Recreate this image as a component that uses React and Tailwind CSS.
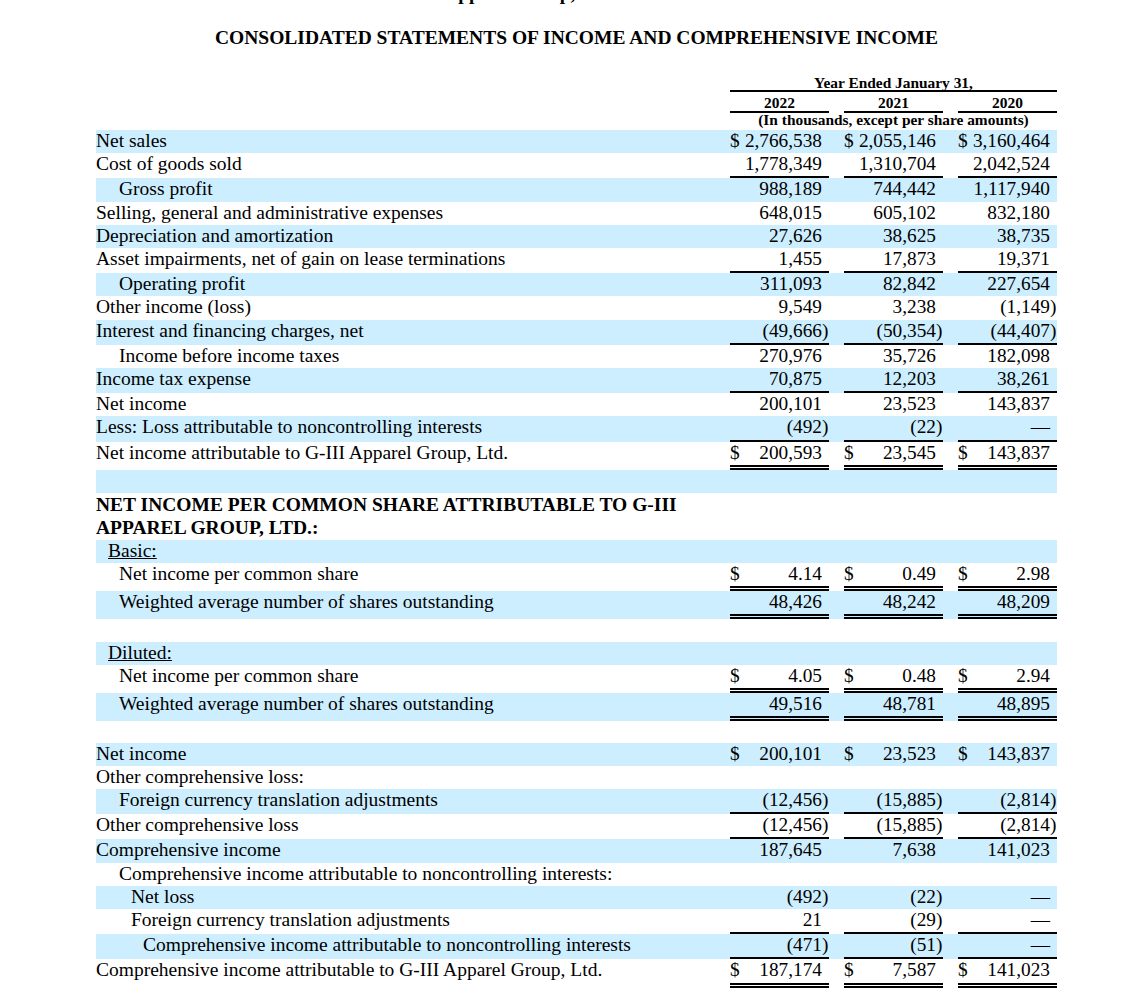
export default function App() {
  const indents = ['pl-0', 'pl-[12px]', 'pl-[23px]', 'pl-[35px]', 'pl-[47px]'];

  const top = [
    { label: 'Net sales', usd: true, vals: ['2,766,538', '2,055,146', '3,160,464'] },
    { label: 'Cost of goods sold', vals: ['1,778,349', '1,310,704', '2,042,524'], line: 'single' },
    { label: 'Gross profit', indent: 2, vals: ['988,189', '744,442', '1,117,940'] },
    { label: 'Selling, general and administrative expenses', vals: ['648,015', '605,102', '832,180'] },
    { label: 'Depreciation and amortization', vals: ['27,626', '38,625', '38,735'] },
    { label: 'Asset impairments, net of gain on lease terminations', vals: ['1,455', '17,873', '19,371'], line: 'single' },
    { label: 'Operating profit', indent: 2, vals: ['311,093', '82,842', '227,654'] },
    { label: 'Other income (loss)', vals: ['9,549', '3,238', '(1,149)'] },
    { label: 'Interest and financing charges, net', vals: ['(49,666)', '(50,354)', '(44,407)'], line: 'single' },
    { label: 'Income before income taxes', indent: 2, vals: ['270,976', '35,726', '182,098'] },
    { label: 'Income tax expense', vals: ['70,875', '12,203', '38,261'], line: 'single' },
    { label: 'Net income', vals: ['200,101', '23,523', '143,837'] },
    { label: 'Less: Loss attributable to noncontrolling interests', vals: ['(492)', '(22)', '—'], line: 'single' },
    { label: 'Net income attributable to G-III Apparel Group, Ltd.', usd: true, vals: ['200,593', '23,545', '143,837'], line: 'double' },
  ];

  const basic = [
    { label: 'Basic:', indent: 1, under: true },
    { label: 'Net income per common share', indent: 2, usd: true, vals: ['4.14', '0.49', '2.98'], line: 'double' },
    { label: 'Weighted average number of shares outstanding', indent: 2, vals: ['48,426', '48,242', '48,209'], line: 'double' },
  ];

  const diluted = [
    { label: 'Diluted:', indent: 1, under: true },
    { label: 'Net income per common share', indent: 2, usd: true, vals: ['4.05', '0.48', '2.94'], line: 'double' },
    { label: 'Weighted average number of shares outstanding', indent: 2, vals: ['49,516', '48,781', '48,895'], line: 'double' },
  ];

  const bottom = [
    { label: 'Net income', usd: true, vals: ['200,101', '23,523', '143,837'] },
    { label: 'Other comprehensive loss:' },
    { label: 'Foreign currency translation adjustments', indent: 2, vals: ['(12,456)', '(15,885)', '(2,814)'], line: 'single' },
    { label: 'Other comprehensive loss', vals: ['(12,456)', '(15,885)', '(2,814)'], line: 'single' },
    { label: 'Comprehensive income', vals: ['187,645', '7,638', '141,023'] },
    { label: 'Comprehensive income attributable to noncontrolling interests:', indent: 2 },
    { label: 'Net loss', indent: 3, vals: ['(492)', '(22)', '—'] },
    { label: 'Foreign currency translation adjustments', indent: 3, vals: ['21', '(29)', '—'], line: 'single' },
    { label: 'Comprehensive income attributable to noncontrolling interests', indent: 4, vals: ['(471)', '(51)', '—'], line: 'single' },
    { label: 'Comprehensive income attributable to G-III Apparel Group, Ltd.', usd: true, vals: ['187,174', '7,587', '141,023'], line: 'double' },
  ];

  const Cell = ({ value, usd, line }) => {
    const neg = value && value.endsWith(')');
    const border =
      line === 'single'
        ? 'border-b-2 border-black'
        : line === 'double'
        ? 'border-b-[5px] border-double border-black'
        : '';
    return (
      <div className={`flex w-[99px] justify-between pb-[2.2px] text-[19.3px] leading-[21px] ${border}`}>
        <span>{usd ? '$' : ''}</span>
        <span className="flex">
          <span>{neg ? value.slice(0, -1) : value}</span>
          <span className="w-[7px]">{neg ? ')' : ''}</span>
        </span>
      </div>
    );
  };

  const Row = ({ row, blue }) => (
    <div className={`flex ${blue ? 'bg-[#cceeff]' : 'bg-white'}`}>
      <div className={`w-[634px] pb-[2.2px] leading-[21px] ${indents[row.indent || 0]}`}>
        <span className={row.under ? 'underline' : ''}>{row.label}</span>
      </div>
      {row.vals ? (
        <>
          <Cell value={row.vals[0]} usd={row.usd} line={row.line} />
          <div className="w-[15px]" />
          <Cell value={row.vals[1]} usd={row.usd} line={row.line} />
          <div className="w-[15px]" />
          <Cell value={row.vals[2]} usd={row.usd} line={row.line} />
        </>
      ) : null}
    </div>
  );

  return (
    <div className="min-h-screen bg-white font-['Liberation_Serif',serif] text-black">
      <div className="ml-[96px] w-[961px]">
        <div className="h-[5px] overflow-hidden">
          <p className="-mt-[16.5px] text-center text-[19.3px] font-bold leading-[20px]">
            G-III Apparel Group, Ltd. and Subsidiaries
          </p>
        </div>
        <h1 className="mt-[22.5px] text-center text-[19.5px] font-bold leading-[20px]">
          CONSOLIDATED STATEMENTS OF INCOME AND COMPREHENSIVE INCOME
        </h1>

        <div className="mt-[28.6px] flex text-[15.4px] font-bold">
          <div className="w-[634px]" />
          <div className="w-[327px]">
            <div className="border-b-2 border-black text-center leading-[14px]">Year Ended January 31,</div>
            <div className="flex justify-between">
              <div className="w-[99px] border-b-2 border-black pb-[1px] pt-[3px] text-center leading-[15px]">2022</div>
              <div className="w-[99px] border-b-2 border-black pb-[1px] pt-[3px] text-center leading-[15px]">2021</div>
              <div className="w-[99px] border-b-2 border-black pb-[1px] pt-[3px] text-center leading-[15px]">2020</div>
            </div>
            <div className="whitespace-nowrap pb-[4px] text-center leading-[13px]">
              (In thousands, except per share amounts)
            </div>
          </div>
        </div>

        <div className="text-[19.5px]">
          {top.map((row, i) => (
            <Row key={'t' + i} row={row} blue={i % 2 === 0} />
          ))}
          <div className="h-[23.2px] bg-[#cceeff]" />
          <div className="bg-white font-bold leading-[23.3px]">
            NET INCOME PER COMMON SHARE ATTRIBUTABLE TO G-III
            <br />
            APPAREL GROUP, LTD.:
          </div>
          {basic.map((row, i) => (
            <Row key={'b' + i} row={row} blue={i % 2 === 0} />
          ))}
          <div className="h-[22.5px] bg-white" />
          {diluted.map((row, i) => (
            <Row key={'d' + i} row={row} blue={i % 2 === 0} />
          ))}
          <div className="h-[21.5px] bg-white" />
          {bottom.map((row, i) => (
            <Row key={'c' + i} row={row} blue={i % 2 === 0} />
          ))}
        </div>
      </div>
    </div>
  );
}
